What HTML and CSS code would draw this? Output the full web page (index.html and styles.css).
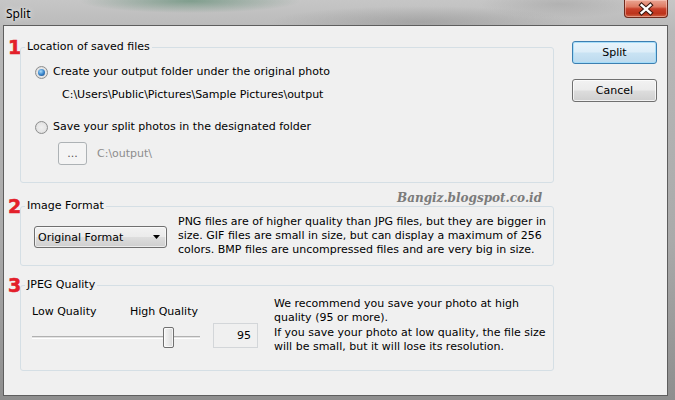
FILE: index.html
```html
<!DOCTYPE html>
<html>
<head>
<meta charset="utf-8">
<title>Split</title>
<link rel="stylesheet" href="styles.css">
</head>
<body>
<div class="window">
  <div class="titlebar">
    <span class="title">Split</span>
    <div class="close">
      <svg width="44" height="18" viewBox="0 0 44 18">
        <path d="M18 5 L27 13 M27 5 L18 13" stroke="#3b1810" stroke-width="4.6" stroke-linecap="square" fill="none"/>
        <path d="M18 5 L27 13 M27 5 L18 13" stroke="#ffffff" stroke-width="2.4" stroke-linecap="square" fill="none"/>
      </svg>
    </div>
  </div>
  <div class="client">
    <div class="main">
      <section class="sec">
        <span class="num">1</span>
        <fieldset class="group">
          <legend>Location of saved files</legend>
          <div class="body g1">
            <div class="radio-row"><span class="radio checked"></span>Create your output folder under the original photo</div>
            <div class="path">C:\Users\Public\Pictures\Sample Pictures\output</div>
            <div class="radio-row r2"><span class="radio"></span>Save your split photos in the designated folder</div>
            <div class="browse-row"><span class="browse">...</span><span class="dest">C:\output\</span></div>
          </div>
        </fieldset>
      </section>
      <section class="sec s2">
        <span class="num">2</span>
        <fieldset class="group">
          <legend>Image Format</legend>
          <div class="body g2">
            <div class="select">
              <span>Original Format</span>
              <svg class="arrow" width="7" height="4" viewBox="0 0 7 4"><path d="M0 0 H7 L3.5 4 Z" fill="#000"/></svg>
            </div>
            <p class="desc d2">PNG files are of higher quality than JPG files, but they are bigger in<br>size. GIF files are small in size, but can display a maximum of 256<br>colors. BMP files are uncompressed files and are very big in size.</p>
          </div>
        </fieldset>
      </section>
      <section class="sec s3">
        <span class="num">3</span>
        <fieldset class="group">
          <legend>JPEG Quality</legend>
          <div class="body g3">
            <div class="slider-col">
              <div class="labels"><span>Low Quality</span><span>High Quality</span></div>
              <div class="slider">
                <div class="track"></div>
                <div class="thumb" style="left:131px"></div>
              </div>
            </div>
            <div class="value">95</div>
            <p class="desc d3">We recommend you save your photo at high<br>quality (95 or more).<br>If you save your photo at low quality, the file size<br>will be small, but it will lose its resolution.</p>
          </div>
        </fieldset>
      </section>
    </div>
    <div class="actions">
      <button class="btn default">Split</button>
      <button class="btn">Cancel</button>
    </div>
    <div class="watermark">Bangiz.blogspot.co.id</div>
  </div>
</div>
</body>
</html>
```

FILE: styles.css
```css
html, body {
  margin: 0;
  padding: 0;
}
body {
  width: 675px;
  height: 400px;
  overflow: hidden;
  font-family: "DejaVu Sans", sans-serif;
  font-size: 11px;
  color: #000;
  background:
    radial-gradient(ellipse 110px 12px at 190px 1px, rgba(70, 125, 95, 0.55), rgba(70, 125, 95, 0) 100%),
    radial-gradient(ellipse 150px 16px at 420px 22px, rgba(110, 110, 110, 0.3), rgba(110, 110, 110, 0) 100%),
    radial-gradient(ellipse 80px 14px at 560px 4px, rgba(150, 150, 150, 0.4), rgba(150, 150, 150, 0) 100%),
    linear-gradient(180deg, #c6c6c6 0%, #b8b8b8 8%, #aaaaaa 60%, #8e8e8e 100%);
}
.window {
  display: flex;
  flex-direction: column;
  height: 400px;
}
.titlebar {
  height: 25px;
  display: flex;
  align-items: flex-start;
  flex: none;
}
.title {
  margin: 5px 0 0 6px;
  font-family: "Noto Sans", "DejaVu Sans", sans-serif;
  font-size: 12px;
  line-height: 17px;
  color: #000;
  text-shadow: 0 0 6px rgba(255, 255, 255, 0.8), 0 0 3px rgba(255, 255, 255, 0.6);
}
.close {
  margin-left: auto;
  margin-right: 7px;
  width: 44px;
  height: 18px;
  box-sizing: border-box;
  border: 1px solid #6e2a1d;
  border-top: none;
  border-radius: 0 0 4px 4px;
  background: linear-gradient(180deg, #eaa593 0%, #de7a62 40%, #c8402a 52%, #bd341c 80%, #cf6446 100%);
  box-shadow: inset 0 0 0 1px rgba(255, 220, 210, 0.45);
  display: flex;
}
.close svg {
  margin-left: -1px;
}
.client {
  flex: 1;
  margin: 0 7px 4px 3px;
  border: 1px solid #5e5e5e;
  background: #f0f0f0;
  display: flex;
  align-items: flex-start;
  padding-left: 4px;
  position: relative;
}
.main {
  width: 546px;
  padding-top: 14px;
}
.sec {
  display: flex;
  align-items: flex-start;
}
.s2 {
  margin-top: 16px;
}
.s3 {
  margin-top: 12px;
}
.num {
  width: 12px;
  flex: none;
  font-family: "DejaVu Sans", sans-serif;
  font-weight: bold;
  font-size: 19px;
  line-height: 15px;
  color: #e3202a;
  -webkit-text-stroke: 0.5px #e3202a;
}
.group {
  margin: 0;
  padding: 0;
  width: 534px;
  min-width: 0;
  box-sizing: border-box;
  border: 1px solid #d5dfe5;
  border-radius: 3px;
}
legend {
  margin-left: 4px;
  padding: 0 2px;
  font-size: 11px;
  line-height: 14px;
}
.body {
  display: flex;
}
.g1 {
  flex-direction: column;
  padding: 10px 0 17px 14px;
}
.radio-row {
  display: flex;
  align-items: center;
  height: 16px;
  line-height: 16px;
}
.r2 {
  margin-top: 16px;
}
.radio {
  width: 13px;
  height: 13px;
  box-sizing: border-box;
  border-radius: 50%;
  border: 1px solid #8d8e8e;
  background: radial-gradient(circle at 50% 50%, #f0f0f0 0%, #e6e6e6 55%, #cdcdcd 100%);
  margin-right: 5px;
  position: relative;
  flex: none;
}
.radio.checked::after {
  content: "";
  position: absolute;
  left: 2px;
  top: 2px;
  width: 7px;
  height: 7px;
  border-radius: 50%;
  background: radial-gradient(circle at 40% 35%, #a9dcfb 0%, #3a86cc 50%, #163f74 100%);
}
.path {
  margin: 7px 0 0 27px;
  height: 16px;
  line-height: 16px;
}
.browse-row {
  display: flex;
  align-items: center;
  margin: 7px 0 0 23px;
}
.browse {
  width: 29px;
  height: 23px;
  box-sizing: border-box;
  border: 1px solid #adb2b5;
  border-radius: 3px;
  background: #f4f4f4;
  color: #555;
  display: flex;
  align-items: center;
  justify-content: center;
  line-height: 12px;
}
.dest {
  margin-left: 10px;
  color: #8d8d8d;
}
.g2 {
  padding: 2px 0 8px 13px;
  align-items: flex-start;
}
.select {
  margin-top: 11px;
  width: 133px;
  height: 22px;
  box-sizing: border-box;
  border: 1px solid #707070;
  border-radius: 3px;
  background: linear-gradient(180deg, #f2f2f2 0%, #ebebeb 48%, #dddddd 52%, #cfcfcf 100%);
  box-shadow: inset 0 0 0 1px rgba(255, 255, 255, 0.6);
  display: flex;
  align-items: center;
  padding: 0 6px 0 3px;
  flex: none;
}
.arrow {
  margin-left: auto;
}
.desc {
  margin: 0;
  white-space: nowrap;
}
.d2 {
  margin-left: 11px;
  line-height: 14px;
}
.g3 {
  padding: 0 0 16px 11px;
  align-items: flex-start;
}
.slider-col {
  margin-top: 13px;
  width: 168px;
  flex: none;
}
.labels {
  display: flex;
  justify-content: space-between;
  padding-right: 2px;
  line-height: 14px;
}
.slider {
  margin-top: 8px;
  height: 21px;
  position: relative;
}
.track {
  position: absolute;
  left: 0;
  right: 0;
  top: 9px;
  height: 1px;
  border-top: 1px solid #b1b1b1;
  border-bottom: 1px solid #ffffff;
  background: #e3e3e3;
}
.thumb {
  position: absolute;
  top: 0;
  width: 11px;
  height: 21px;
  box-sizing: border-box;
  border: 1px solid #707070;
  border-radius: 2px;
  background: linear-gradient(90deg, #f6f6f6 0%, #e9e9e9 50%, #d9d9d9 100%);
  box-shadow: inset 0 0 0 1px rgba(255, 255, 255, 0.7);
}
.value {
  margin: 31px 0 0 13px;
  width: 45px;
  height: 25px;
  box-sizing: border-box;
  border: 1px solid #d3d6d9;
  background: #f0f0f0;
  text-align: right;
  padding-right: 6px;
  line-height: 23px;
  flex: none;
}
.d3 {
  margin: 5px 0 0 16px;
  line-height: 14.3px;
}
.actions {
  margin-left: 18px;
  padding-top: 15px;
  display: flex;
  flex-direction: column;
  gap: 15px;
}
.btn {
  width: 85px;
  height: 23px;
  box-sizing: border-box;
  border: 1px solid #707070;
  border-radius: 3px;
  background: linear-gradient(180deg, #f2f2f2 0%, #ebebeb 48%, #dddddd 52%, #cfcfcf 100%);
  box-shadow: inset 0 0 0 1px rgba(255, 255, 255, 0.7);
  font-family: inherit;
  font-size: 11px;
  color: #000;
  padding: 0;
  margin: 0;
}
.btn.default {
  border-color: #3c7fb1;
  background: linear-gradient(180deg, #e8f4fb 0%, #dcedf8 48%, #c9e3f3 52%, #bcdaee 100%);
  box-shadow: inset 0 0 0 1px rgba(160, 220, 250, 0.9);
}
.watermark {
  position: absolute;
  left: 393px;
  top: 165px;
  font-family: "DejaVu Serif", serif;
  font-style: italic;
  font-weight: bold;
  font-size: 12px;
  line-height: 14px;
  color: #7b7b7b;
}
```
